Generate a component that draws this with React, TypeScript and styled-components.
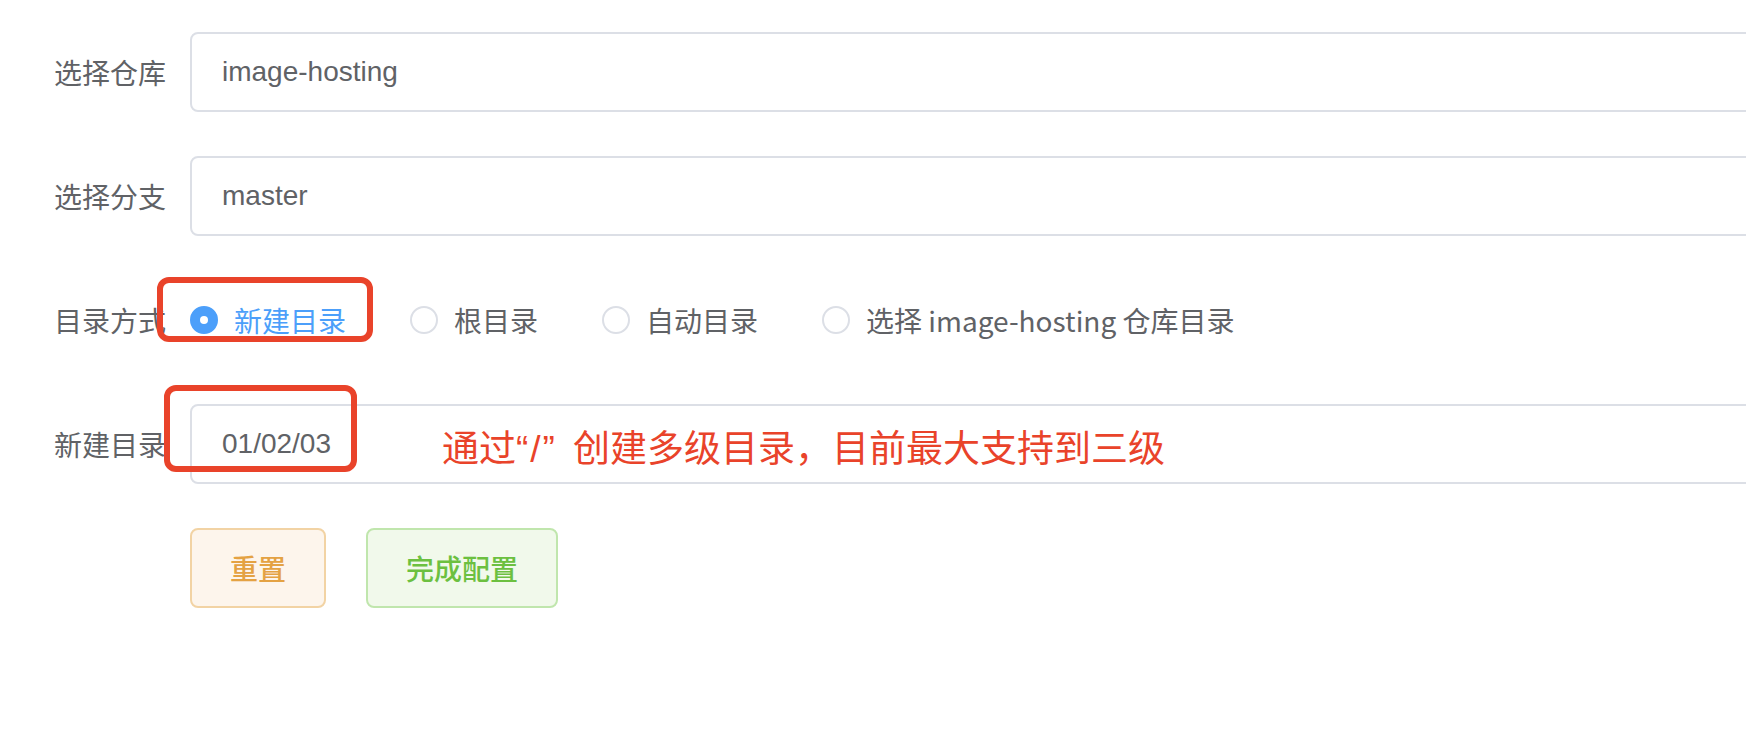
import React, { useState } from 'react';
import styled, { createGlobalStyle } from 'styled-components';

const GlobalStyle = createGlobalStyle`
    html, body {
        margin: 0;
        padding: 0;
        background: #ffffff;
        overflow: hidden;
    }
    body {
        font-family: "Noto Sans CJK SC", "Liberation Sans", sans-serif;
    }
`;

const Page = styled.div`
    position: relative;
    padding: 32px 0 0 30px;
    height: 724px;
`;

const Form = styled.form`
    display: flex;
    flex-direction: column;
    gap: 44px;
`;

const FormItem = styled.div`
    display: flex;
    align-items: center;
    height: 80px;
`;

const Label = styled.label`
    width: 160px;
    flex-shrink: 0;
    box-sizing: border-box;
    padding-right: 24px;
    text-align: right;
    font-size: 28px;
    line-height: 80px;
    color: #606266;
    white-space: nowrap;
`;

const Content = styled.div`
    flex: 1;
    display: flex;
    align-items: center;
    margin-right: -24px;
`;

const Input = styled.input`
    width: 100%;
    height: 80px;
    box-sizing: border-box;
    padding: 0 30px;
    border: 2px solid #dcdfe6;
    border-radius: 8px;
    background: #ffffff;
    font-family: "Liberation Sans", "Noto Sans CJK SC", sans-serif;
    font-size: 28px;
    color: #606266;
    outline: none;
`;

const RadioGroup = styled.div`
    display: flex;
    align-items: center;
`;

const RadioOption = styled.label`
    display: flex;
    align-items: center;
    margin-right: 64px;
    cursor: pointer;
`;

const RadioCircle = styled.span<{ checked: boolean }>`
    position: relative;
    width: 28px;
    height: 28px;
    box-sizing: border-box;
    border-radius: 50%;
    border: 2px solid ${(p) => (p.checked ? '#4c9ffa' : '#dcdfe6')};
    background: ${(p) => (p.checked ? '#4c9ffa' : '#ffffff')};

    &::after {
        content: '';
        display: ${(p) => (p.checked ? 'block' : 'none')};
        position: absolute;
        left: 50%;
        top: 50%;
        width: 8px;
        height: 8px;
        margin: -4px 0 0 -4px;
        border-radius: 50%;
        background: #ffffff;
    }
`;

const RadioText = styled.span<{ checked: boolean }>`
    padding-left: 16px;
    font-size: 28px;
    line-height: 28px;
    color: ${(p) => (p.checked ? '#4c9ffa' : '#606266')};
    white-space: nowrap;
`;

const Buttons = styled.div`
    display: flex;
    gap: 40px;
`;

const Button = styled.button<{ kind: 'warning' | 'success' }>`
    height: 80px;
    padding: 0 38px;
    border-radius: 8px;
    border: 2px solid ${(p) => (p.kind === 'warning' ? '#f2d3a4' : '#c0e6ad')};
    background: ${(p) => (p.kind === 'warning' ? '#fdf5ec' : '#f1f9eb')};
    color: ${(p) => (p.kind === 'warning' ? '#e4a243' : '#6cc040')};
    font-family: "Noto Sans CJK SC", sans-serif;
    font-size: 28px;
    font-weight: 500;
    line-height: 1;
    cursor: pointer;
`;

const Highlight = styled.div<{ left: number; top: number; w: number; h: number }>`
    position: absolute;
    left: ${(p) => p.left}px;
    top: ${(p) => p.top}px;
    width: ${(p) => p.w}px;
    height: ${(p) => p.h}px;
    box-sizing: border-box;
    border: 6px solid #e9432a;
    border-radius: 12px;
    pointer-events: none;
`;

const Note = styled.div`
    position: absolute;
    left: 442px;
    top: 426px;
    font-size: 37px;
    line-height: 40px;
    color: #e9432a;
    white-space: nowrap;
    pointer-events: none;
`;

const Quote = styled.span`
    font-family: "Liberation Sans", sans-serif;
    letter-spacing: 2px;
    margin-right: 16px;
`;

const modes = ['新建目录', '根目录', '自动目录', '选择 image-hosting 仓库目录'];

const App: React.FC = () => {
    const [mode, setMode] = useState(0);

    return (
        <>
            <GlobalStyle />
            <Page>
                <Form onSubmit={(e) => e.preventDefault()}>
                    <FormItem>
                        <Label>选择仓库</Label>
                        <Content>
                            <Input defaultValue="image-hosting" />
                        </Content>
                    </FormItem>
                    <FormItem>
                        <Label>选择分支</Label>
                        <Content>
                            <Input defaultValue="master" />
                        </Content>
                    </FormItem>
                    <FormItem>
                        <Label>目录方式</Label>
                        <Content>
                            <RadioGroup>
                                {modes.map((m, i) => (
                                    <RadioOption key={m} onClick={() => setMode(i)}>
                                        <RadioCircle checked={mode === i} />
                                        <RadioText checked={mode === i}>{m}</RadioText>
                                    </RadioOption>
                                ))}
                            </RadioGroup>
                        </Content>
                    </FormItem>
                    <FormItem>
                        <Label>新建目录</Label>
                        <Content>
                            <Input defaultValue="01/02/03" />
                        </Content>
                    </FormItem>
                    <FormItem>
                        <Label />
                        <Buttons>
                            <Button type="button" kind="warning">重置</Button>
                            <Button type="submit" kind="success">完成配置</Button>
                        </Buttons>
                    </FormItem>
                </Form>

                <Highlight left={157} top={277} w={216} h={65} />
                <Highlight left={164} top={385} w={193} h={87} />
                <Note>
                    通过<Quote>“/”</Quote>创建多级目录，目前最大支持到三级
                </Note>
            </Page>
        </>
    );
};

export default App;
